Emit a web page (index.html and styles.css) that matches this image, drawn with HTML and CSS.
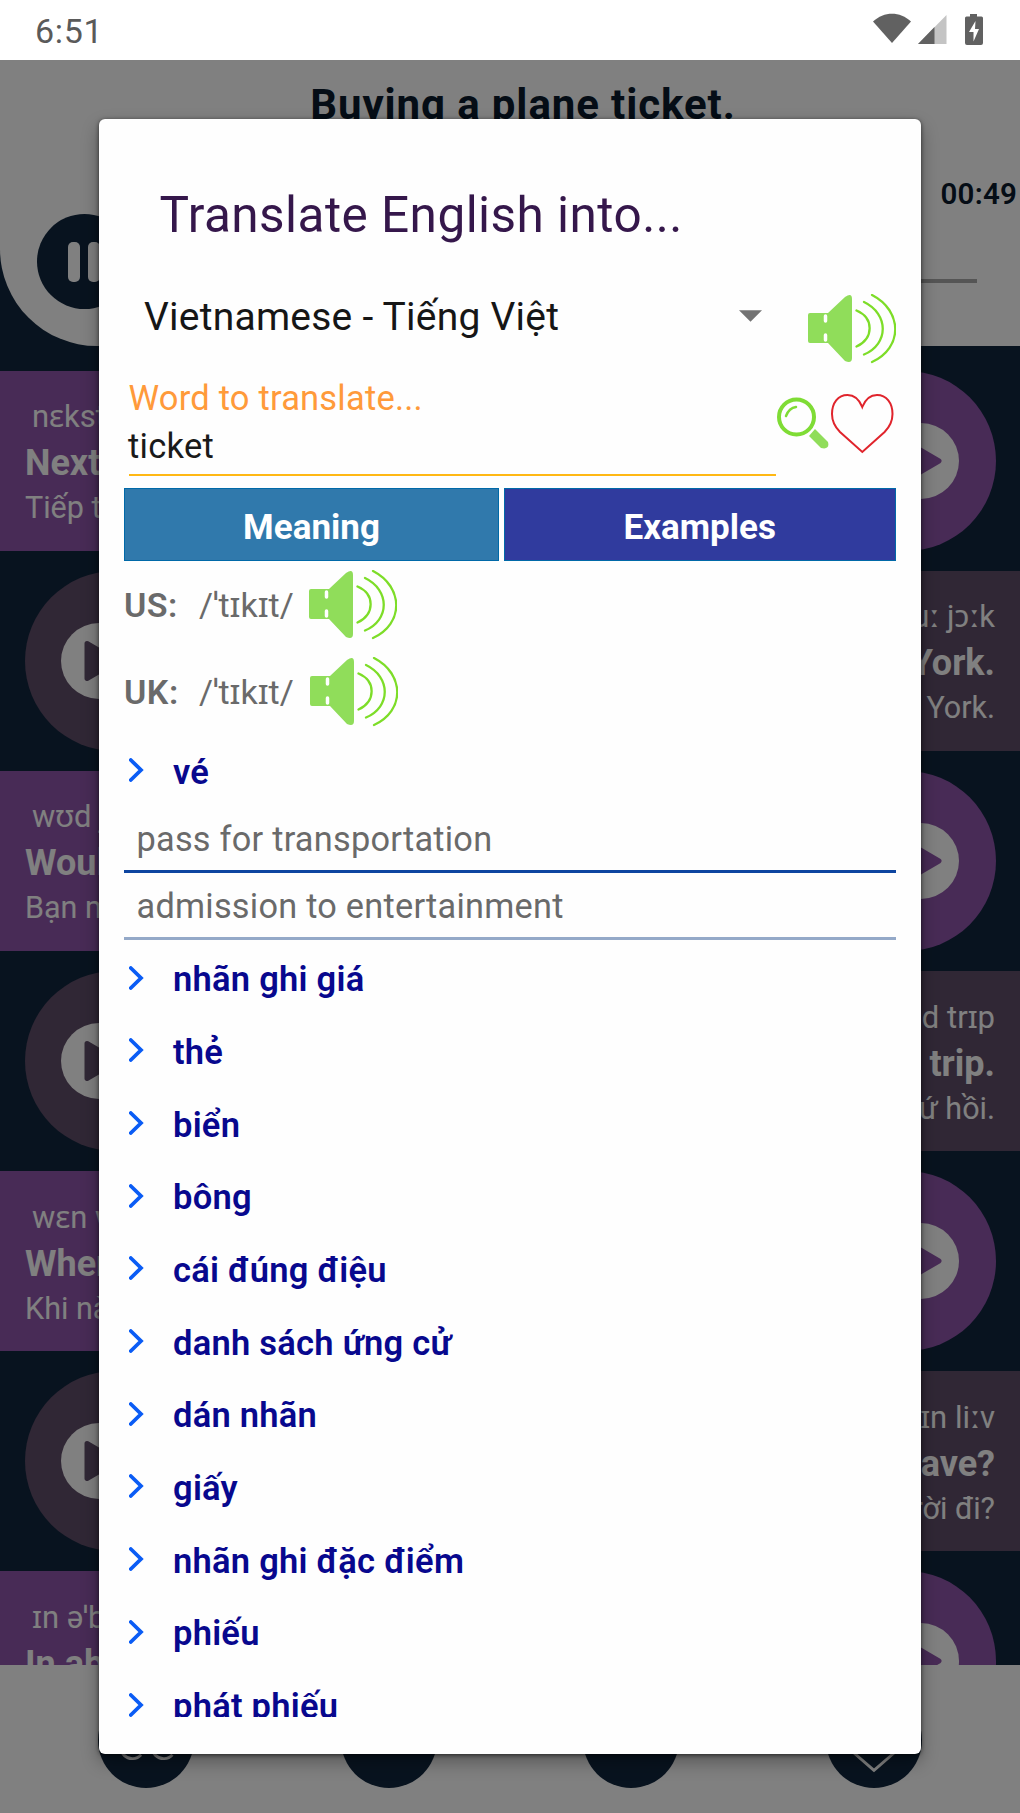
FILE: index.html
```html
<!DOCTYPE html>
<html lang="vi">
<head>
<meta charset="utf-8">
<title>Translate</title>
<link rel="stylesheet" href="styles.css">
</head>
<body>
<svg class="defs" aria-hidden="true">
  <symbol id="speaker" viewBox="0 0 88 70">
    <path d="M2 19H16V27Q20 27 20 23V19L37 3Q44-2 44 5V64Q44 70 37 67L20 49V45Q20 41 16 41V49H2Q0 49 0 47V21Q0 19 2 19Z" fill="#90dd5a"/>
    <path d="M16 19H20V27H16ZM16 41H20V49H16Z" fill="#90dd5a"/>
    <path d="M17.500 22v5M17.500 41v5" stroke="#fff" stroke-width="3.500" stroke-linecap="round"/>
    <path d="M48.500 16.500C66 24 66 44 48.500 52.500M56 8C81 20 81 50 56 60.500M64 1C95 17 95 54 64 68" fill="none" stroke="#7ddd28" stroke-width="2.300" stroke-linecap="round"/>
  </symbol>
  <symbol id="play" viewBox="0 0 76 76">
    <circle cx="38" cy="38" r="38" fill="#fff"/>
    <path d="M26 20.500 56 38 26 55.500Z" fill="currentColor" stroke="currentColor" stroke-width="5" stroke-linejoin="round"/>
  </symbol>
  <symbol id="chevron" viewBox="0 0 15 24">
    <path d="M1.800 2 12 12 1.800 22" fill="none" stroke="#0a5cf5" stroke-width="3.800" stroke-linecap="round" stroke-linejoin="miter"/>
  </symbol>
</svg>
<div class="screen">
  <header class="status">
    <span class="clock">6:51</span>
    <svg class="status-icons" viewBox="0 0 112 34">
      <path d="M0 8.500C11-2 27-2 38 8.500L19 30Z" fill="#616161"/>
      <path d="M73.500 2V31H45Z" fill="#c4c4c4"/><path d="M61.500 14V31H45Z" fill="#616161"/>
      <path d="M97 1h7v2.500h4.500q1.500 0 1.500 1.500v25q0 2-2 2H94q-2 0-2-2V5q0-1.500 1.500-1.500H97Z" fill="#616161"/>
      <path d="M102.500 8 96 19h4.500v9.500L106 16h-4Z" fill="#fff"/>
    </svg>
  </header>

  <main class="app">
    <section class="player">
      <h1 class="lesson">Buying a plane ticket.</h1>
      <time class="duration">00:49</time>
      <div class="controls">
        <svg class="pause" viewBox="0 0 95 95"><circle cx="47.500" cy="47.500" r="47.500" fill="#10263e"/><rect x="31" y="28" width="12" height="40" rx="5" fill="#fff"/><rect x="51" y="28" width="12" height="40" rx="5" fill="#fff"/></svg>
        <div class="seek"></div>
      </div>
    </section>
    <section class="dialogue">
      <article class="line">
        <div class="words"><p class="ipa">nɛkst</p><p class="phrase">Next</p><p class="local">Tiếp theo</p></div>
        <svg class="play"><use href="#play"/></svg>
      </article>
      <article class="line reply">
        <svg class="play"><use href="#play"/></svg>
        <div class="words"><p class="ipa">nuː jɔːk</p><p class="phrase">York.</p><p class="local">York.</p></div>
      </article>
      <article class="line">
        <div class="words"><p class="ipa">wʊd ju</p><p class="phrase">Would</p><p class="local">Bạn m</p></div>
        <svg class="play"><use href="#play"/></svg>
      </article>
      <article class="line reply">
        <svg class="play"><use href="#play"/></svg>
        <div class="words"><p class="ipa">raʊnd trɪp</p><p class="phrase">trip.</p><p class="local">khứ hồi.</p></div>
      </article>
      <article class="line">
        <div class="words"><p class="ipa">wɛn wɪl</p><p class="phrase">When</p><p class="local">Khi nào</p></div>
        <svg class="play"><use href="#play"/></svg>
      </article>
      <article class="line reply">
        <svg class="play"><use href="#play"/></svg>
        <div class="words"><p class="ipa">treɪn liːv</p><p class="phrase">leave?</p><p class="local">rời đi?</p></div>
      </article>
      <article class="line">
        <div class="words"><p class="ipa">ɪn əˈbaʊt</p><p class="phrase">In about</p><p class="local">Trong</p></div>
        <svg class="play"><use href="#play"/></svg>
      </article>
    </section>
    <nav class="toolbar">
      <svg class="tool" viewBox="0 0 98 98"><circle cx="49" cy="49" r="49" fill="#10263e"/><path d="M46 58a12 12 0 1 1 0-16M78 58a12 12 0 1 1 0-16" transform="translate(-2 6)" fill="none" stroke="#fff" stroke-width="3"/></svg>
      <svg class="tool" viewBox="0 0 98 98"><circle cx="49" cy="49" r="49" fill="#10263e"/></svg>
      <svg class="tool" viewBox="0 0 98 98"><circle cx="49" cy="49" r="49" fill="#10263e"/></svg>
      <svg class="tool" viewBox="0 0 98 98"><circle cx="49" cy="49" r="49" fill="#10263e"/><path d="M49 80 26 60C10 42 36 18 49 38C62 18 88 42 72 60Z" fill="none" stroke="#fff" stroke-width="3"/></svg>
    </nav>
  </main>
  <div class="scrim"></div>

  <div class="dialog">
    <h2 class="dialog-title">Translate English into...</h2>
    <div class="language">
      <span class="language-name">Vietnamese - Tiếng Việt</span>
      <svg class="caret" viewBox="0 0 24 12"><path d="M0 0H24L12 12Z" fill="#737373"/></svg>
      <svg class="speaker"><use href="#speaker"/></svg>
    </div>
    <div class="lookup">
      <div class="field"><label class="field-label">Word to translate...</label><div class="field-value">ticket</div></div>
      <svg class="search" viewBox="0 0 52 54"><circle cx="19.500" cy="20" r="17.500" fill="none" stroke="#7fdc35" stroke-width="4"/><path d="M9 19Q12 11 19 10" fill="none" stroke="#7fdc35" stroke-width="2.500" stroke-linecap="round"/><path d="M38 32 51 45Q53 53 44 51L32 39Z" fill="#90dd5a"/></svg>
      <svg class="heart" viewBox="0 0 64 62"><path d="M32.300 15C29 7 24 3 17.500 3 8 3 2 11 2 22 2 30 5 35 10 40L32.300 60 54.600 40C59.500 35 62.500 30 62.500 22 62.500 11 56.500 3 47 3 40.500 3 35.500 7 32.300 15Z" fill="none" stroke="#e0242c" stroke-width="2"/></svg>
    </div>
    <div class="tabs"><button class="tab meaning">Meaning</button><button class="tab examples">Examples</button></div>
    <div class="accent"><b>US:</b><span>/ˈtɪkɪt/</span><svg class="speaker"><use href="#speaker"/></svg></div>
    <div class="accent uk"><b>UK:</b><span>/ˈtɪkɪt/</span><svg class="speaker"><use href="#speaker"/></svg></div>
    <div class="results">
      <div class="entry"><svg><use href="#chevron"/></svg>vé</div>
      <div class="sense first">pass for transportation</div>
      <div class="sense last">admission to entertainment</div>
      <div class="entry"><svg><use href="#chevron"/></svg>nhãn ghi giá</div>
      <div class="entry"><svg><use href="#chevron"/></svg>thẻ</div>
      <div class="entry"><svg><use href="#chevron"/></svg>biển</div>
      <div class="entry"><svg><use href="#chevron"/></svg>bông</div>
      <div class="entry"><svg><use href="#chevron"/></svg>cái đúng điệu</div>
      <div class="entry"><svg><use href="#chevron"/></svg>danh sách ứng cử</div>
      <div class="entry"><svg><use href="#chevron"/></svg>dán nhãn</div>
      <div class="entry"><svg><use href="#chevron"/></svg>giấy</div>
      <div class="entry"><svg><use href="#chevron"/></svg>nhãn ghi đặc điểm</div>
      <div class="entry"><svg><use href="#chevron"/></svg>phiếu</div>
      <div class="entry"><svg><use href="#chevron"/></svg>phát phiếu</div>
    </div>
  </div>
</div>
</body>
</html>
```
FILE: styles.css
```css
* { box-sizing: border-box; margin: 0; padding: 0; }
body { font-family: Roboto, "Noto Sans", sans-serif; background: #fff; }
svg { display: block; flex: none; }
.defs { position: absolute; width: 0; height: 0; }
.screen { position: relative; width: 1020px; height: 1813px; overflow: hidden; display: flex; flex-direction: column; }

.status { height: 59.5px; flex: none; display: flex; justify-content: space-between; padding: 0 36px 0 35px; background: #fff; }
.clock { font-size: 34px; line-height: 62px; letter-spacing: .7px; color: #5a5a5a; }
.status-icons { width: 112px; height: 34px; margin: 13px -0.5px 0 0; }

.app { flex: 1; display: flex; flex-direction: column; background: #10263e; min-height: 0; }
.player { height: 286.5px; flex: none; background: #fff; border-bottom-left-radius: 97px; color: #0a1a2c; display: flex; flex-direction: column; }
.lesson { font-size: 42px; line-height: 44px; font-weight: 700; letter-spacing: .9px; margin: 23px 0 0 26px; text-align: center; }
.duration { font-size: 29.5px; line-height: 34px; font-weight: 600; letter-spacing: .2px; text-align: right; margin: 50px 3px 0 0; }
.controls { display: flex; align-items: flex-start; gap: 40px; padding: 3px 43px 0 37px; }
.pause { width: 95px; height: 95px; }
.seek { flex: 1; height: 4px; background: #aaa; margin-top: 65px; }

.dialogue { flex: none; height: 1318.5px; overflow: hidden; padding-top: 24.5px; display: flex; flex-direction: column; gap: 19.6px; }
.line { flex: none; height: 180.5px; margin-right: 24px; padding: 0 37px 0 25px; border-radius: 0 90px 90px 0; background: #9056ac; color: #9056ac; display: flex; align-items: center; justify-content: space-between; }
.line.reply { margin: 0 0 0 25px; padding: 0 25px 0 36px; border-radius: 90px 0 0 90px; background: #604e6a; color: #604e6a; text-align: right; }
.play { width: 76px; height: 76px; }
.words { color: #fff; padding-top: 1px; }
.ipa { font-size: 31px; line-height: 47px; padding-left: 7px; }
.phrase { font-size: 36px; line-height: 47px; font-weight: 700; }
.local { font-size: 30.5px; line-height: 42px; }
.toolbar { flex: 1; background: #fff; display: flex; justify-content: space-between; padding: 27px 98px 0; }
.tool { width: 96px; height: 96px; }

.scrim { position: absolute; inset: 59.5px 0 0; background: rgba(0, 0, 0, .498); }
.dialog { position: absolute; left: 99px; top: 118.5px; width: 822px; height: 1635px; padding: 66.500px 25.500px 0 25px; border-radius: 6px; background: #fefefe; box-shadow: 0 8px 18px rgba(0, 0, 0, .32), 0 1px 4px rgba(0, 0, 0, .6); }
.dialog-title { font-size: 49.5px; line-height: 60px; font-weight: 400; letter-spacing: .45px; margin-left: 35.5px; color: #35174b; white-space: nowrap; }
.language { display: flex; align-items: flex-start; height: 88px; margin-top: 47px; padding-left: 20px; }
.language-name { flex: 1; font-size: 39px; line-height: 51px; letter-spacing: .23px; color: #161616; white-space: nowrap; }
.caret { width: 23px; height: 12px; margin: 18px 46px 0 0; }
.speaker { width: 88px; height: 70px; }
.language .speaker { margin: 2px -.5px 0 .5px; }
.lookup { display: flex; align-items: flex-start; height: 108px; padding-left: 4.5px; }
.field { width: 647.5px; height: 96px; border-bottom: 2.5px solid #ffb814; }
.field-label { display: block; font-size: 34.5px; line-height: 36px; letter-spacing: .2px; color: #ff9a3a; }
.field-value { font-size: 34.5px; line-height: 61px; letter-spacing: .25px; color: #1a1a1a; margin-left: -.5px; }
.search { width: 52px; height: 54px; margin: 17px 0 0 1px; }
.heart { width: 64px; height: 62px; margin: 12px 0 0 1px; }
.tabs { display: flex; gap: 5px; height: 73px; }
.tab { font: 700 35px/69px Roboto, sans-serif; padding-top: 4px; color: #fff; border: 1.500px solid #0069a8; }
.meaning { width: 375px; background: #3079ac; }
.examples { flex: 1; background: #303b9e; }
.accent { display: flex; align-items: center; height: 87.3px; font-size: 34px; line-height: 44px; color: #6a6a6a; }
.accent b { width: 75px; font-weight: 600; letter-spacing: .5px; }
.accent span { width: 109.5px; white-space: nowrap; }
.accent.uk span { width: 110.5px; }
.results { height: 981px; overflow: hidden; color: #08088e; }
.entry { display: flex; align-items: center; height: 72.7px; padding-left: 5px; font-size: 34.5px; font-weight: 600; line-height: 44px; letter-spacing: .25px; }
.entry svg { width: 15px; height: 24px; margin: 0 29px 3px 0; }
.sense { padding-left: 12.5px; font-size: 34.3px; letter-spacing: .25px; color: #6a6a6a; }
.first { height: 64.5px; padding-top: 1px; line-height: 61px; border-bottom: 3px solid #0d45a0; }
.last { height: 67px; padding-top: 4px; line-height: 58px; border-bottom: 3.500px solid #94a9c8; margin-bottom: 3px; }
```
